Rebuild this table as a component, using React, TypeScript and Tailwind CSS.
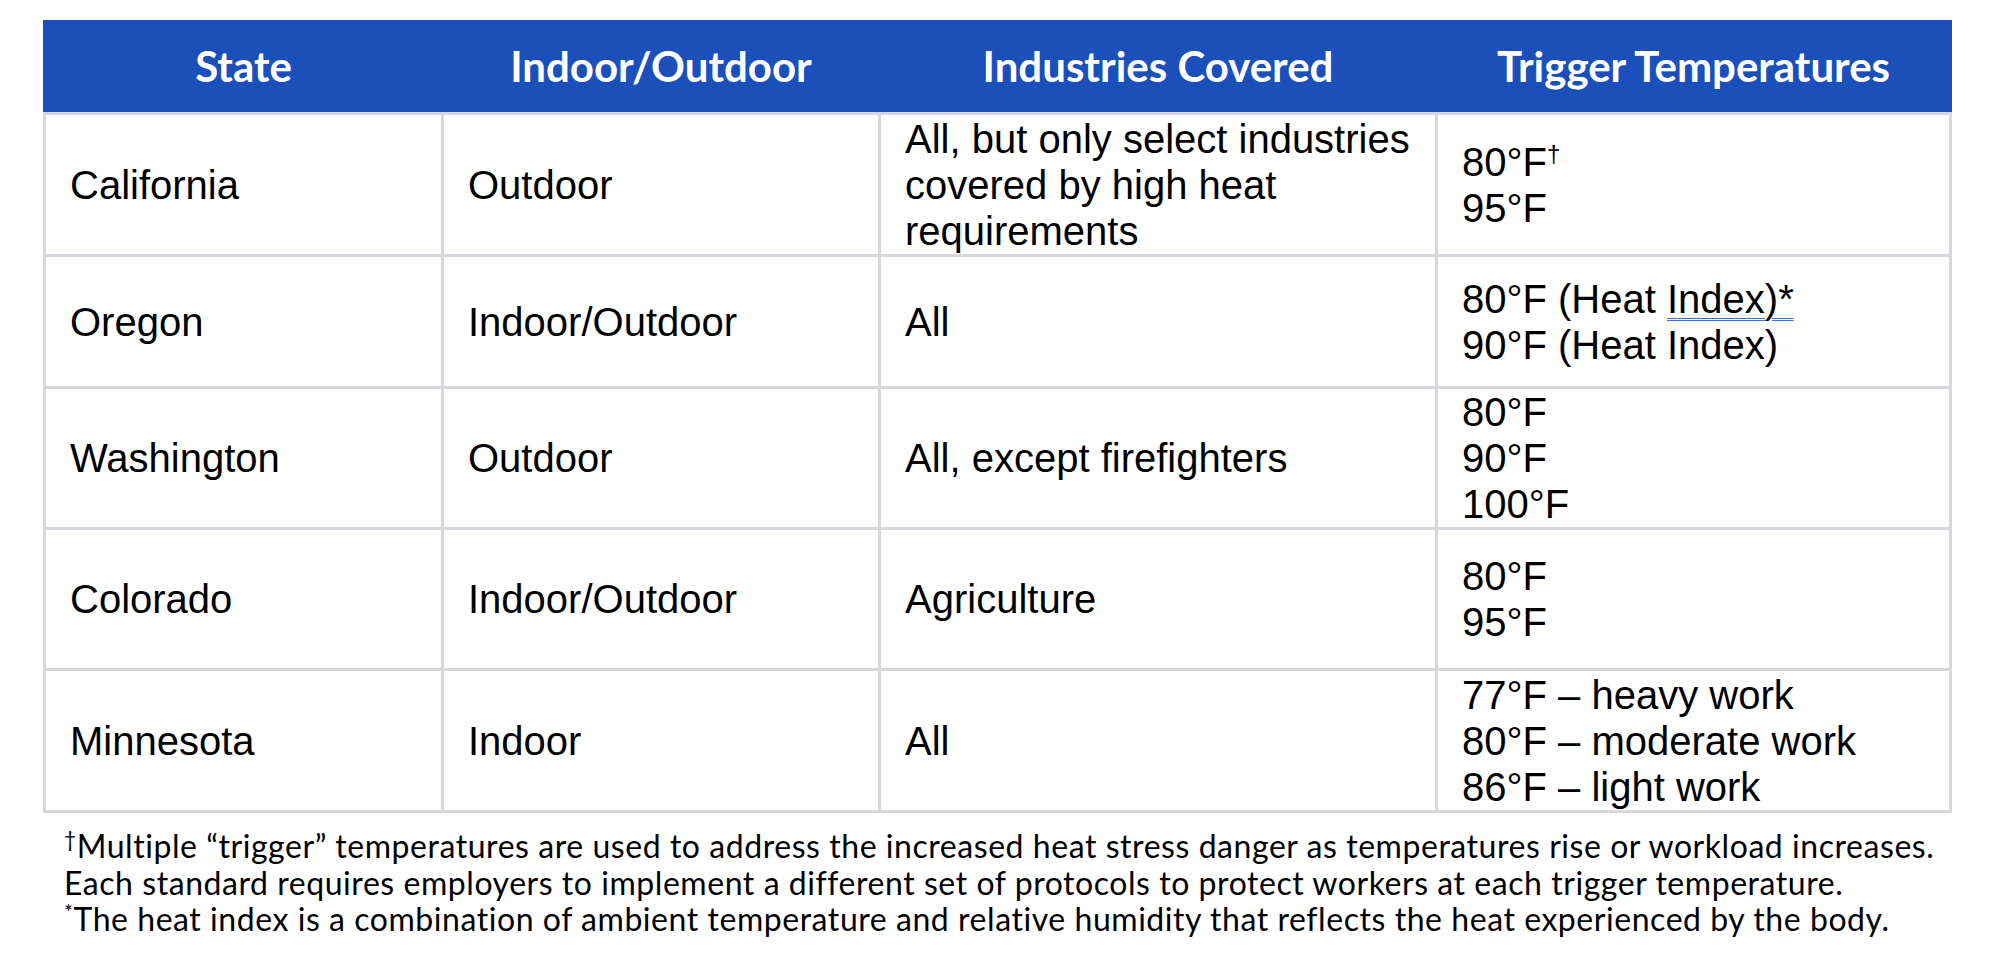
import React from 'react';

const cols = 'grid grid-cols-[395px_434px_554px_511px] gap-x-[3px]';

type Row = {
    state: string;
    place: string;
    industries: React.ReactNode[];
    temps: React.ReactNode[];
    h: string;
};

function Sup({ children }: { children: React.ReactNode }) {
    return <span className="relative -top-[14px] text-[24px] leading-none">{children}</span>;
}

export default function App() {
    const rows: Row[] = [
        {
            state: 'California',
            place: 'Outdoor',
            industries: ['All, but only select industries', 'covered by high heat', 'requirements'],
            temps: [
                <>
                    80°F<Sup>†</Sup>
                </>,
                '95°F',
            ],
            h: 'h-[139px]',
        },
        {
            state: 'Oregon',
            place: 'Indoor/Outdoor',
            industries: ['All'],
            temps: [
                <>
                    80°F (Heat{' '}
                    <span className="underline decoration-double decoration-1 decoration-[#3b6fd8] underline-offset-[5px]">
                        Index)*
                    </span>
                </>,
                '90°F (Heat Index)',
            ],
            h: 'h-[129px]',
        },
        {
            state: 'Washington',
            place: 'Outdoor',
            industries: ['All, except firefighters'],
            temps: ['80°F', '90°F', '100°F'],
            h: 'h-[138px]',
        },
        {
            state: 'Colorado',
            place: 'Indoor/Outdoor',
            industries: ['Agriculture'],
            temps: ['80°F', '95°F'],
            h: 'h-[138px]',
        },
        {
            state: 'Minnesota',
            place: 'Indoor',
            industries: ['All'],
            temps: ['77°F – heavy work', '80°F – moderate work', '86°F – light work'],
            h: 'h-[139px]',
        },
    ];

    const headers = ['State', 'Indoor/Outdoor', 'Industries Covered', 'Trigger Temperatures'];

    return (
        <div className="min-h-screen w-full bg-white pt-[20px] pl-[43px]">
            <div className="w-[1909px]">
                {/* header */}
                <div className={`${cols} h-[92px] items-center bg-[#1b4fba] px-[3px] text-center font-['Lato',sans-serif] text-[42px] font-bold text-white`}>
                    {headers.map((h) => (
                        <div key={h}>{h}</div>
                    ))}
                </div>

                {/* body */}
                <div className={`${cols} gap-y-[3px] bg-[#d6d8de] p-[3px] font-['Liberation_Sans',Arial,sans-serif] text-[40px] leading-[46px] text-black`}>
                    {rows.map((r) => (
                        <React.Fragment key={r.state}>
                            <div className={`${r.h} flex items-center bg-white px-[24px]`}>{r.state}</div>
                            <div className={`${r.h} flex items-center bg-white px-[24px]`}>{r.place}</div>
                            <div className={`${r.h} flex flex-col justify-center bg-white px-[24px]`}>
                                {r.industries.map((t, i) => (
                                    <div key={i} className="whitespace-nowrap">
                                        {t}
                                    </div>
                                ))}
                            </div>
                            <div className={`${r.h} flex flex-col justify-center bg-white px-[24px]`}>
                                {r.temps.map((t, i) => (
                                    <div key={i} className="whitespace-nowrap">
                                        {t}
                                    </div>
                                ))}
                            </div>
                        </React.Fragment>
                    ))}
                </div>

                {/* footnotes */}
                <div className="mt-[15px] pl-[21px] font-['Lato',sans-serif] text-[32px] leading-[36.5px] tracking-[0.55px] text-black">
                    <div className="h-[36.5px] whitespace-nowrap">
                        <span className="relative -top-[11px] text-[21px] leading-none">†</span>Multiple “trigger” temperatures are used to address the increased heat stress danger as temperatures rise or workload increases.
                    </div>
                    <div className="h-[36.5px] whitespace-nowrap">
                        Each standard requires employers to implement a different set of protocols to protect workers at each trigger temperature.
                    </div>
                    <div className="h-[36.5px] whitespace-nowrap">
                        <span className="relative -top-[11px] text-[21px] leading-none">*</span>The heat index is a combination of ambient temperature and relative humidity that reflects the heat experienced by the body.
                    </div>
                </div>
            </div>
        </div>
    );
}
